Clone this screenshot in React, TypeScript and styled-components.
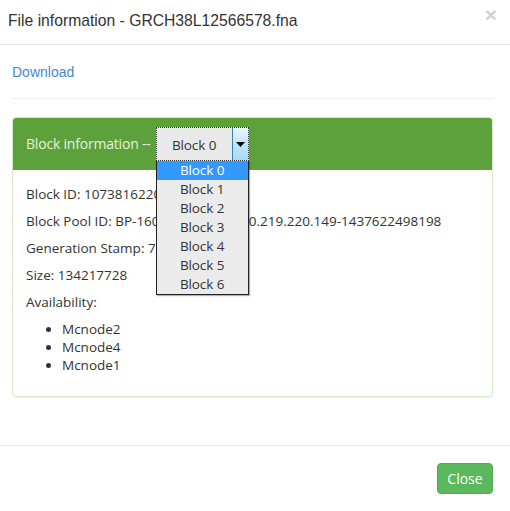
import { createGlobalStyle } from 'styled-components';
import styled from 'styled-components';

const GlobalStyle = createGlobalStyle`
  html, body {
    margin: 0;
    padding: 0;
    background: #fff;
  }
  body {
    font-family: 'Open Sans', 'Noto Sans', sans-serif;
    color: #333;
  }
`;

const blocks = ['Block 0', 'Block 1', 'Block 2', 'Block 3', 'Block 4', 'Block 5', 'Block 6'];
const nodes = ['Mcnode2', 'Mcnode4', 'Mcnode1'];

function App() {
  const selected = 0;
  return (
    <Modal>
      <GlobalStyle />
      <Header>
        <Title>File information - GRCH38L12566578.fna</Title>
        <CloseX>×</CloseX>
      </Header>
      <Body>
        <DownloadLink href='#'>Download</DownloadLink>
        <Rule />
        <Panel>
          <PanelHeading>
            <HeadingText>Block information --</HeadingText>
            <SelectWrap>
              <SelectBox>
                <SelectValue>{blocks[selected]}</SelectValue>
                <ArrowButton>
                  <svg width='9' height='5' viewBox='0 0 9 5'>
                    <path d='M0 0 H9 L4.5 5 Z' fill='#000' />
                  </svg>
                </ArrowButton>
              </SelectBox>
              <OptionList>
                {blocks.map((b, idx) => (
                  <Option key={b} active={idx === selected}>
                    {b}
                  </Option>
                ))}
              </OptionList>
            </SelectWrap>
          </PanelHeading>
          <PanelBody>
            <Line>Block ID: 1073816220</Line>
            <Line>Block Pool ID: BP-1606489127543-10.219.220.149-1437622498198</Line>
            <Line>Generation Stamp: 75396</Line>
            <Line>Size: 134217728</Line>
            <Line>Availability:</Line>
            <NodeList>
              {nodes.map((n) => (
                <li key={n}>{n}</li>
              ))}
            </NodeList>
          </PanelBody>
        </Panel>
      </Body>
      <Footer>
        <CloseButton>Close</CloseButton>
      </Footer>
    </Modal>
  );
}
export default App;

const Modal = styled.div`
  width: 510px;
  height: 511px;
  background: #fff;
  display: flex;
  flex-direction: column;
`;

const Header = styled.div`
  height: 44px;
  border-bottom: 1px solid #e5e5e5;
  display: flex;
  align-items: center;
  justify-content: space-between;
  padding: 0 13px 0 8px;
`;

const Title = styled.h4`
  margin: 0;
  padding-bottom: 2px;
  font-family: 'Liberation Sans', Arial, sans-serif;
  font-weight: normal;
  font-size: 15.7px;
  color: #333;
`;

const CloseX = styled.span`
  font-family: 'Liberation Sans', Arial, sans-serif;
  font-size: 21px;
  font-weight: bold;
  color: #d0d0d8;
  margin-top: -14px;
`;

const Body = styled.div`
  padding: 17px 17px 48px 12px;
`;

const DownloadLink = styled.a`
  display: block;
  font-family: 'Liberation Sans', Arial, sans-serif;
  font-size: 14px;
  line-height: 20px;
  color: #428bca;
  text-decoration: none;
`;

const Rule = styled.hr`
  border: 0;
  border-top: 1px solid #eee;
  margin: 16px 0 18px;
`;

const Panel = styled.div`
  border: 1px solid #d6e9c6;
  border-radius: 4px;
  box-shadow: 0 1px 1px rgba(0, 0, 0, 0.05);
`;

const PanelHeading = styled.div`
  height: 52px;
  background: #5da13c;
  border-radius: 3px 3px 0 0;
  display: flex;
  align-items: center;
  padding: 0 13px;
  gap: 5px;
`;

const HeadingText = styled.span`
  color: #e4f2dc;
  font-size: 14px;
  letter-spacing: -0.2px;
  padding-bottom: 2px;
`;

const SelectWrap = styled.div`
  position: relative;
`;

const SelectBox = styled.div`
  width: 91px;
  height: 32px;
  border: 1px dotted #333;
  background: #e9e9e9;
  display: flex;
  align-items: stretch;
  box-sizing: content-box;
`;

const SelectValue = styled.span`
  flex: 1;
  display: flex;
  align-items: center;
  justify-content: center;
  font-size: 13.5px;
  letter-spacing: -0.1px;
  color: #333;
  padding-top: 1px;
`;

const ArrowButton = styled.span`
  width: 15px;
  border-left: 1px solid #3c7fb1;
  background: linear-gradient(#eaf6fd, #bee6fd 50%, #a7d9f5);
  display: flex;
  align-items: center;
  justify-content: center;
`;

const OptionList = styled.div`
  position: absolute;
  top: 34px;
  left: 0;
  width: 91px;
  background: #ebebeb;
  border: 1px solid #222;
  border-top: 0;
  box-shadow: 1px 1px 1px rgba(0, 0, 0, 0.3);
  z-index: 2;
`;

const Option = styled.div<{ active: boolean }>`
  height: 19px;
  line-height: 19px;
  text-align: center;
  font-size: 13.5px;
  letter-spacing: -0.1px;
  background: ${(props) => (props.active ? '#3399ff' : 'transparent')};
  color: ${(props) => (props.active ? '#fff' : '#333')};
`;

const PanelBody = styled.div`
  padding: 15px 13px 13px;
  font-size: 13.5px;
  color: #333;
`;

const Line = styled.p`
  margin: 0 0 9px;
  line-height: 18px;
`;

const NodeList = styled.ul`
  margin: 0 0 9px;
  padding-left: 36px;
  line-height: 18px;
`;

const Footer = styled.div`
  border-top: 1px solid #e5e5e5;
  display: flex;
  justify-content: flex-end;
  padding: 17px 17px 0 0;
`;

const CloseButton = styled.button`
  width: 56px;
  height: 31px;
  background: #5cb85c;
  border: 1px solid #4cae4c;
  border-radius: 4px;
  color: #fff;
  font-family: 'Open Sans', 'Noto Sans', sans-serif;
  font-size: 14px;
  padding: 0;
`;
